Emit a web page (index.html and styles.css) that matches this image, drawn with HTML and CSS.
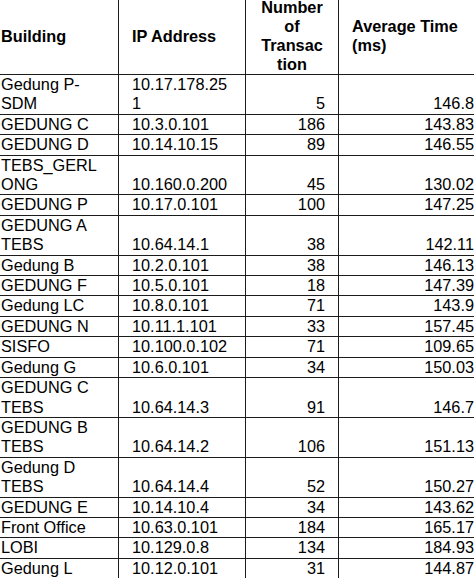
FILE: index.html
```html
<!DOCTYPE html>
<html>
<head>
<meta charset="utf-8">
<link rel="stylesheet" href="styles.css">
</head>
<body>
<table class="data">
  <colgroup>
    <col class="c-building">
    <col class="c-ip">
    <col class="c-num">
    <col class="c-avg">
  </colgroup>
  <thead>
    <tr>
      <th class="left">Building</th>
      <th class="left">IP Address</th>
      <th class="center">Number<br>of<br>Transac<br>tion</th>
      <th class="left">Average Time<br>(ms)</th>
    </tr>
  </thead>
  <tbody>
    <tr><td>Gedung P-<br>SDM</td><td>10.17.178.25<br>1</td><td class="num">5</td><td class="num">146.8</td></tr>
    <tr><td>GEDUNG C</td><td>10.3.0.101</td><td class="num">186</td><td class="num">143.83</td></tr>
    <tr><td>GEDUNG D</td><td>10.14.10.15</td><td class="num">89</td><td class="num">146.55</td></tr>
    <tr><td>TEBS_GERL<br>ONG</td><td>10.160.0.200</td><td class="num">45</td><td class="num">130.02</td></tr>
    <tr><td>GEDUNG P</td><td>10.17.0.101</td><td class="num">100</td><td class="num">147.25</td></tr>
    <tr><td>GEDUNG A<br>TEBS</td><td>10.64.14.1</td><td class="num">38</td><td class="num">142.11</td></tr>
    <tr><td>Gedung B</td><td>10.2.0.101</td><td class="num">38</td><td class="num">146.13</td></tr>
    <tr><td>GEDUNG F</td><td>10.5.0.101</td><td class="num">18</td><td class="num">147.39</td></tr>
    <tr><td>Gedung LC</td><td>10.8.0.101</td><td class="num">71</td><td class="num">143.9</td></tr>
    <tr><td>GEDUNG N</td><td>10.11.1.101</td><td class="num">33</td><td class="num">157.45</td></tr>
    <tr><td>SISFO</td><td>10.100.0.102</td><td class="num">71</td><td class="num">109.65</td></tr>
    <tr><td>Gedung G</td><td>10.6.0.101</td><td class="num">34</td><td class="num">150.03</td></tr>
    <tr><td>GEDUNG C<br>TEBS</td><td>10.64.14.3</td><td class="num">91</td><td class="num">146.7</td></tr>
    <tr><td>GEDUNG B<br>TEBS</td><td>10.64.14.2</td><td class="num">106</td><td class="num">151.13</td></tr>
    <tr><td>Gedung D<br>TEBS</td><td>10.64.14.4</td><td class="num">52</td><td class="num">150.27</td></tr>
    <tr><td>GEDUNG E</td><td>10.14.10.4</td><td class="num">34</td><td class="num">143.62</td></tr>
    <tr><td>Front Office</td><td>10.63.0.101</td><td class="num">184</td><td class="num">165.17</td></tr>
    <tr><td>LOBI</td><td>10.129.0.8</td><td class="num">134</td><td class="num">184.93</td></tr>
    <tr><td>Gedung L</td><td>10.12.0.101</td><td class="num">31</td><td class="num">144.87</td></tr>
  </tbody>
</table>
</body>
</html>
```
FILE: styles.css
```css
html, body {
  margin: 0;
  padding: 0;
  background: #ffffff;
  overflow: hidden;
}

body {
  width: 474px;
  height: 578px;
  font-family: "Liberation Sans", Arial, sans-serif;
  color: #000;
}

.data {
  border-collapse: collapse;
  table-layout: fixed;
  width: 500px;
  margin: -3px 0 0 -13px;
  font-size: 16.3px;
}

.c-building { width: 131px; }
.c-ip { width: 127px; }
.c-num { width: 93px; }
.c-avg { width: 149px; }

.data th,
.data td {
  border: 1px solid #1c1c1c;
  padding: 0 13px;
  white-space: nowrap;
  overflow: hidden;
}

.data th {
  font-weight: bold;
  line-height: 19px;
  vertical-align: middle;
}

.data td {
  line-height: 19.4px;
  vertical-align: bottom;
}

.left { text-align: left; }
.center { text-align: center; }
.num { text-align: right; }
```
